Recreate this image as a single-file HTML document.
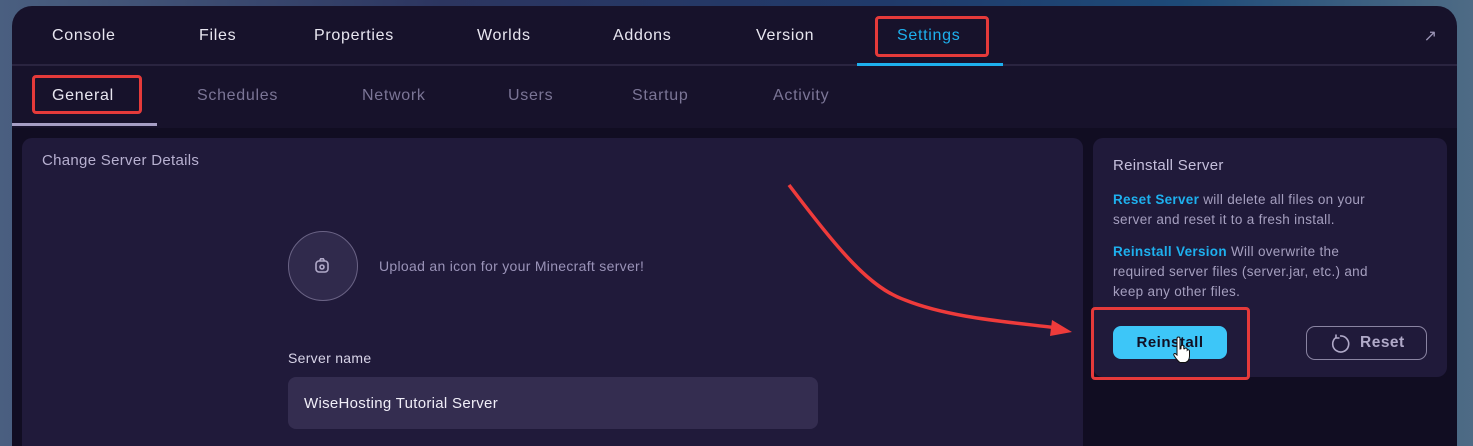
<!DOCTYPE html><html><head><style>
html,body{margin:0;width:1473px;height:446px;overflow:hidden}
body{background:linear-gradient(90deg,#4a5f80,#2c3560 30%,#203a6a 60%,#1d4a78 80%,#4e6b85);font-family:"Liberation Sans",sans-serif;position:relative}
.panel{position:absolute;left:12px;top:6px;width:1445px;height:440px;background:#17122b;border-radius:20px 20px 0 0;overflow:hidden}
.t{position:absolute;font-size:16px;color:#e8e6f0;letter-spacing:0.7px}
.s{position:absolute;font-size:16px;color:#7b7596;letter-spacing:0.7px}
.box{position:absolute;border:3px solid #e53a3a;border-radius:4px}
.p{letter-spacing:0.3px}
</style></head><body>
<div class="panel">
<div class="t" style="left:40px;top:21px">Console</div>
<div class="t" style="left:187px;top:21px">Files</div>
<div class="t" style="left:302px;top:21px">Properties</div>
<div class="t" style="left:465px;top:21px">Worlds</div>
<div class="t" style="left:601px;top:21px">Addons</div>
<div class="t" style="left:744px;top:21px">Version</div>
<div class="t" style="left:885px;top:21px;color:#1eb0ee">Settings</div>
<div style="position:absolute;right:20px;top:20px;color:#9a93b5;font-size:16px">↗</div>
<div style="position:absolute;left:0;top:58px;width:1445px;height:2px;background:#2a2440"></div>
<div style="position:absolute;left:845px;top:57px;width:146px;height:3px;background:#1eb0ee"></div>
<div class="t" style="left:40px;top:81px">General</div>
<div class="s" style="left:185px;top:81px">Schedules</div>
<div class="s" style="left:350px;top:81px">Network</div>
<div class="s" style="left:496px;top:81px">Users</div>
<div class="s" style="left:620px;top:81px">Startup</div>
<div class="s" style="left:761px;top:81px">Activity</div>
<div style="position:absolute;left:0;top:117px;width:145px;height:3px;background:#a69ec4"></div>
<div style="position:absolute;left:0;top:122px;width:1445px;height:320px;background:#110d22"></div>
<div style="position:absolute;left:10px;top:132px;width:1061px;height:320px;background:#201a3a;border-radius:10px"></div>
<div style="position:absolute;left:1081px;top:132px;width:354px;height:239px;background:#201a3a;border-radius:10px"></div>
</div>
<div class="p" style="position:absolute;left:42px;top:152px;font-size:15px;color:#b7b0d0">Change Server Details</div>
<div style="position:absolute;left:288px;top:231px;width:68px;height:68px;border-radius:50%;background:#302a4c;border:1px solid #6a6385"></div>
<svg style="position:absolute;left:313px;top:256px" width="18" height="18" viewBox="0 0 18 18" fill="none" stroke="#b0a9c8" stroke-width="1.6"><rect x="3" y="5" width="12" height="11" rx="3"/><path d="M6.5 5l1.2-2.2h2.6L11.5 5"/><circle cx="9" cy="11" r="2"/></svg>
<div class="p" style="position:absolute;left:379px;top:258px;font-size:14px;color:#9a93b8">Upload an icon for your Minecraft server!</div>
<div class="p" style="position:absolute;left:288px;top:350px;font-size:14px;color:#d8d4e8">Server name</div>
<div style="position:absolute;left:288px;top:377px;width:530px;height:52px;background:#342d50;border-radius:8px"></div>
<div class="p" style="position:absolute;left:304px;top:395px;font-size:15px;color:#f0eef8">WiseHosting Tutorial Server</div>
<div class="p" style="position:absolute;left:1113px;top:157px;font-size:15px;color:#c5bfdc">Reinstall Server</div>
<div class="p" style="position:absolute;left:1113px;top:190px;white-space:nowrap;font-size:13.5px;line-height:20px;color:#a59fbf"><b style="color:#1eb0ee">Reset Server</b> will delete all files on your<br>server and reset it to a fresh install.</div>
<div class="p" style="position:absolute;left:1113px;top:242px;white-space:nowrap;font-size:13.5px;line-height:20px;color:#a59fbf"><b style="color:#1eb0ee">Reinstall Version</b> Will overwrite the<br>required server files (server.jar, etc.) and<br>keep any other files.</div>
<div style="position:absolute;left:1113px;top:326px;width:114px;height:33px;background:#3dc6f8;border-radius:8px;color:#101024;font-size:15px;font-weight:bold;text-align:center;line-height:33px;letter-spacing:0.5px">Reinstall</div>
<div style="position:absolute;left:1306px;top:326px;width:121px;height:34px;border:1px solid #8a84a2;border-radius:9px;box-sizing:border-box"></div>
<svg style="position:absolute;left:1329px;top:333px" width="22" height="22" viewBox="0 0 22 22" fill="none" stroke="#b0a9c8" stroke-width="1.6"><path d="M7 4.5A8 8 0 1 0 11 3"/><path d="M7 1.5v3.5h3.5"/></svg>
<div style="position:absolute;left:1360px;top:334px;font-size:15.5px;font-weight:bold;color:#b0a9c8;letter-spacing:0.5px">Reset</div>
<div class="box" style="left:875px;top:16px;width:108px;height:35px"></div>
<div class="box" style="left:32px;top:75px;width:104px;height:33px"></div>
<div class="box" style="left:1091px;top:307px;width:153px;height:67px"></div>
<svg style="position:absolute;left:1172px;top:336px" width="18" height="32" viewBox="0 0 18 32"><path d="M5 2.5a1.5 1.5 0 0 1 3 0V13l1-.3v-2a1.4 1.4 0 0 1 2.8 0v2l.8 0a1.4 1.4 0 0 1 2.6.5v1a1.3 1.3 0 0 1 2.3.8V20c0 3-1.5 5.5-4 6.5H8C6 25 3.5 22 2 19.5c-.8-1.3.3-2.5 1.5-1.8L5 19Z" fill="#fff" stroke="#111" stroke-width="1"/></svg>
<svg style="position:absolute;left:0;top:0" width="1473" height="446"><path d="M789 185C840 252 870 288 905 300C950 318 1010 322 1058 328" fill="none" stroke="#ee3b3b" stroke-width="3.5"/><path d="M1052 320L1072 332L1050 336Z" fill="#ee3b3b"/></svg>
</body></html>
